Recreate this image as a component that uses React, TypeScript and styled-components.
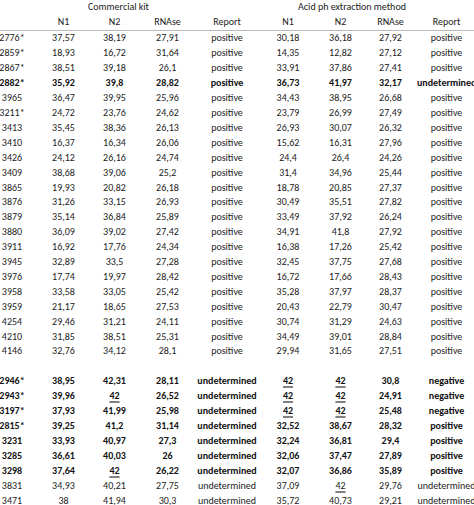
import React from "react";
import styled, { createGlobalStyle } from "styled-components";

const GlobalStyle = createGlobalStyle`
  html, body {
    margin: 0;
    padding: 0;
    background: #ffffff;
    overflow: hidden;
  }
  body {
    font-family: Carlito, Lato, "Open Sans", sans-serif;
  }
`;

// column widths tuned so the centres line up with the scan
const COLUMNS = "52px 51px 51px 55px 64px 58px 47px 53px 59px";

type Cell = string | { v: string; u?: boolean };

interface RowData {
  id: string;
  left: Cell[];
  right: Cell[];
  bold?: boolean;
}

const upperRows: RowData[] = [
  { id: "2776*", left: ["37,57", "38,19", "27,91", "positive"], right: ["30,18", "36,18", "27,92", "positive"] },
  { id: "2859*", left: ["18,93", "16,72", "31,64", "positive"], right: ["14,35", "12,82", "27,12", "positive"] },
  { id: "2867*", left: ["38,51", "39,18", "26,1", "positive"], right: ["33,91", "37,86", "27,41", "positive"] },
  { id: "2882*", bold: true, left: ["35,92", "39,8", "28,82", "positive"], right: ["36,73", "41,97", "32,17", "undetermined"] },
  { id: "3965", left: ["36,47", "39,95", "25,96", "positive"], right: ["34,43", "38,95", "26,68", "positive"] },
  { id: "3211*", left: ["24,72", "23,76", "24,62", "positive"], right: ["23,79", "26,99", "27,49", "positive"] },
  { id: "3413", left: ["35,45", "38,36", "26,13", "positive"], right: ["26,93", "30,07", "26,32", "positive"] },
  { id: "3410", left: ["16,37", "16,34", "26,06", "positive"], right: ["15,62", "16,31", "27,96", "positive"] },
  { id: "3426", left: ["24,12", "26,16", "24,74", "positive"], right: ["24,4", "26,4", "24,26", "positive"] },
  { id: "3409", left: ["38,68", "39,06", "25,2", "positive"], right: ["31,4", "34,96", "25,44", "positive"] },
  { id: "3865", left: ["19,93", "20,82", "26,18", "positive"], right: ["18,78", "20,85", "27,37", "positive"] },
  { id: "3876", left: ["31,26", "33,15", "26,93", "positive"], right: ["30,49", "35,51", "27,82", "positive"] },
  { id: "3879", left: ["35,14", "36,84", "25,89", "positive"], right: ["33,49", "37,92", "26,24", "positive"] },
  { id: "3880", left: ["36,09", "39,02", "27,42", "positive"], right: ["34,91", "41,8", "27,92", "positive"] },
  { id: "3911", left: ["16,92", "17,76", "24,34", "positive"], right: ["16,38", "17,26", "25,42", "positive"] },
  { id: "3945", left: ["32,89", "33,5", "27,28", "positive"], right: ["32,45", "37,75", "27,68", "positive"] },
  { id: "3976", left: ["17,74", "19,97", "28,42", "positive"], right: ["16,72", "17,66", "28,43", "positive"] },
  { id: "3958", left: ["33,58", "33,05", "25,42", "positive"], right: ["35,28", "37,97", "28,37", "positive"] },
  { id: "3959", left: ["21,17", "18,65", "27,53", "positive"], right: ["20,43", "22,79", "30,47", "positive"] },
  { id: "4254", left: ["29,46", "31,21", "24,11", "positive"], right: ["30,74", "31,29", "24,63", "positive"] },
  { id: "4210", left: ["31,85", "38,51", "25,31", "positive"], right: ["34,49", "39,01", "28,84", "positive"] },
  { id: "4146", left: ["32,76", "34,12", "28,1", "positive"], right: ["29,94", "31,65", "27,51", "positive"] },
];

const u42 = { v: "42", u: true };

const lowerRows: RowData[] = [
  { id: "2946*", bold: true, left: ["38,95", "42,31", "28,11", "undetermined"], right: [u42, u42, "30,8", "negative"] },
  { id: "2943*", bold: true, left: ["39,96", u42, "26,52", "undetermined"], right: [u42, u42, "24,91", "negative"] },
  { id: "3197*", bold: true, left: ["37,93", "41,99", "25,98", "undetermined"], right: [u42, u42, "25,48", "negative"] },
  { id: "2815*", bold: true, left: ["39,25", "41,2", "31,14", "undetermined"], right: ["32,52", "38,67", "28,32", "positive"] },
  { id: "3231", bold: true, left: ["33,93", "40,97", "27,3", "undetermined"], right: ["32,24", "36,81", "29,4", "positive"] },
  { id: "3285", bold: true, left: ["36,61", "40,03", "26", "undetermined"], right: ["32,06", "37,47", "27,89", "positive"] },
  { id: "3298", bold: true, left: ["37,64", u42, "26,22", "undetermined"], right: ["32,07", "36,86", "35,89", "positive"] },
  { id: "3831", left: ["34,93", "40,21", "27,75", "undetermined"], right: ["37,09", u42, "29,76", "undetermined"] },
  { id: "3471", left: ["38", "41,94", "30,3", "undetermined"], right: ["35,72", "40,73", "29,21", "undetermined"] },
];

const Table = styled.div`
  width: 490px;
  margin-left: -14px;
  padding-top: 1px;
  font-size: 10px;
  color: #222;
`;

const Row = styled.div<{ $height?: number; $divider?: boolean }>`
  display: grid;
  grid-template-columns: ${COLUMNS};
  height: ${p => p.$height ?? 14.92}px;
  align-items: center;
  border-bottom: ${p => (p.$divider ? "1px solid #b9b9b9" : "none")};
`;

const Title = styled.div<{ $span: string; $shift: number }>`
  grid-column: ${p => p.$span};
  text-align: center;
  padding-right: ${p => p.$shift}px;
  white-space: nowrap;
  line-height: 12px;
`;

const Cell = styled.div<{ $bold?: boolean; $underline?: boolean }>`
  text-align: center;
  white-space: nowrap;
  line-height: 14px;
  font-weight: ${p => (p.$bold ? 700 : 400)};
  color: ${p => (p.$bold ? "#111" : "#222")};
  text-decoration: ${p => (p.$underline ? "underline" : "none")};
  text-decoration-color: #808080;
  text-decoration-thickness: 1.5px;
  text-underline-offset: 2px;
`;

const Gap = styled.div`
  height: 14.92px;
`;

const DataRow: React.FC<{ row: RowData }> = ({ row }) => {
  const cells = [row.id, ...row.left, ...row.right];
  return (
    <Row>
      {cells.map((c, i) => {
        const value = typeof c === "string" ? c : c.v;
        const under = typeof c === "string" ? false : !!c.u;
        return (
          <Cell key={i} $bold={row.bold} $underline={under}>
            {value}
          </Cell>
        );
      })}
    </Row>
  );
};

export default function App() {
  const heads = ["", "N1", "N2", "RNAse", "Report", "N1", "N2", "RNAse", "Report"];
  return (
    <>
      <GlobalStyle />
      <Table>
        <Row $height={12}>
          <Title $span="1 / 6" $shift={8}>Commercial kit</Title>
          <Title $span="6 / 10" $shift={31}>Acid ph extraction method</Title>
        </Row>
        <Row $height={17} $divider>
          {heads.map((h, i) => (
            <Cell key={i}>{h}</Cell>
          ))}
        </Row>
        {upperRows.map(r => (
          <DataRow key={r.id} row={r} />
        ))}
        <Gap />
        {lowerRows.map(r => (
          <DataRow key={r.id} row={r} />
        ))}
      </Table>
    </>
  );
}
